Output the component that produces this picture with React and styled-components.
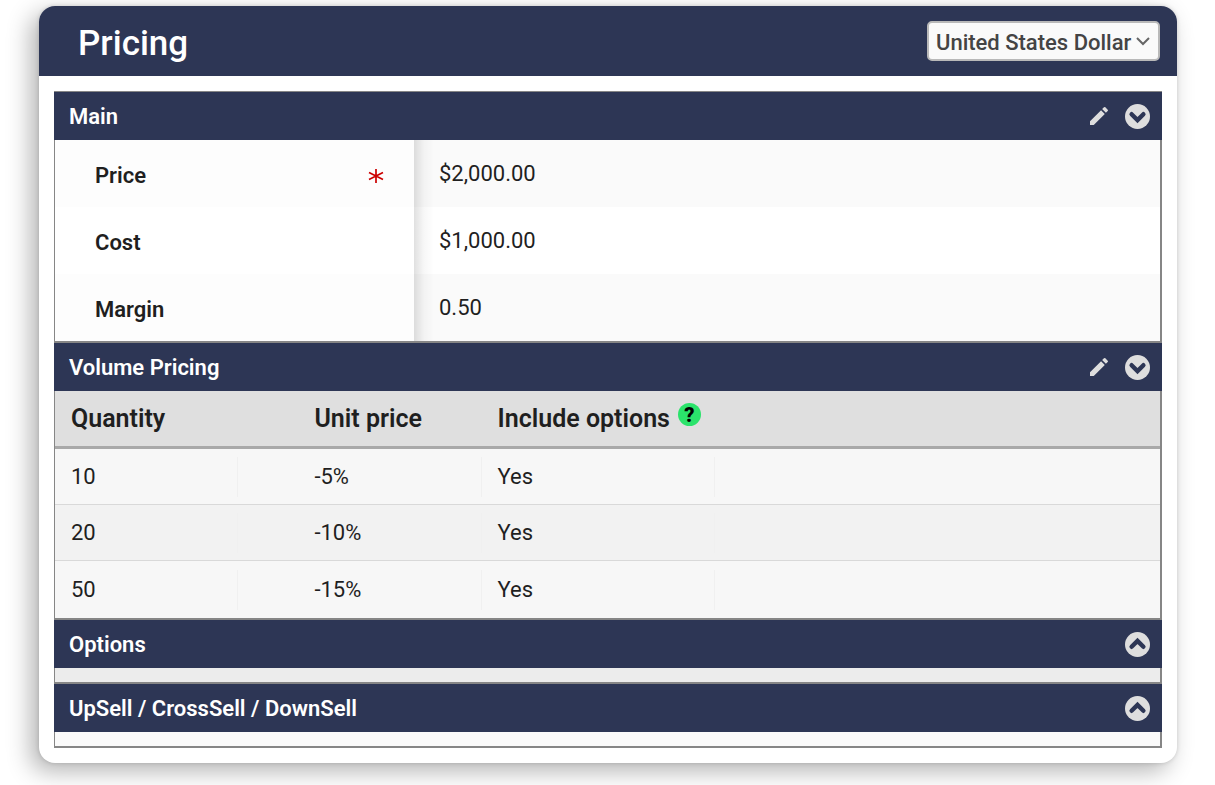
import React, { useState } from 'react';
import styled, { createGlobalStyle, ThemeProvider } from 'styled-components';
import { MdEdit } from 'react-icons/md';

const theme = {
  color: {
    primary: '#2d3655',
    text: '#1f1f1f',
    icon: '#dedede',
    border: '#868686',
    required: '#cc0000',
    help: '#2be36b',
  },
};

const mainFields = [
  { label: 'Price', value: '$2,000.00', required: true },
  { label: 'Cost', value: '$1,000.00' },
  { label: 'Margin', value: '0.50' },
];

const volumeRows = [
  { quantity: 10, price: '-5%', options: 'Yes' },
  { quantity: 20, price: '-10%', options: 'Yes' },
  { quantity: 50, price: '-15%', options: 'Yes' },
];

function Section({ title, editable, defaultOpen, emptyColor, children }) {
  const [open, setOpen] = useState(!!defaultOpen);

  return (
    <Panel>
      <PanelHeader>
        <PanelTitle>{title}</PanelTitle>
        {editable && (
          <IconButton type="button" aria-label={`Edit ${title}`}>
            <MdEdit size={24} />
          </IconButton>
        )}
        <IconButton
          type="button"
          aria-label={`Toggle ${title}`}
          aria-expanded={open}
          onClick={() => setOpen(!open)}
        >
          <Toggle viewBox="0 0 25 25">
            <circle cx="12.5" cy="12.5" r="12.5" />
            <path
              d={
                open
                  ? 'M6.6 10.2l5.9 5.9 5.9-5.9'
                  : 'M6.6 14.8l5.9-5.9 5.9 5.9'
              }
            />
          </Toggle>
        </IconButton>
      </PanelHeader>
      {open && children ? children : <Empty $color={emptyColor} />}
    </Panel>
  );
}

export default function App() {
  const [currency, setCurrency] = useState('usd');

  return (
    <ThemeProvider theme={theme}>
      <GlobalStyle />
      <Card>
        <Header>
          <Title>Pricing</Title>
          <SelectWrapper>
            <Select
              aria-label="Currency"
              value={currency}
              onChange={(e) => setCurrency(e.target.value)}
            >
              <option value="usd">United States Dollar</option>
            </Select>
            <Arrow viewBox="0 0 14 9">
              <path d="M1 1l6 6 6-6" />
            </Arrow>
          </SelectWrapper>
        </Header>

        <Body>
          <Section title="Main" editable defaultOpen>
            <Fields>
              {mainFields.map((field) => (
                <Field key={field.label}>
                  <Label>
                    {field.label}
                    {field.required && (
                      <Required viewBox="0 0 16 16">
                        <path d="M8 1v14M1 4.4l14 7.2M15 4.4l-14 7.2" />
                      </Required>
                    )}
                  </Label>
                  <Value>{field.value}</Value>
                </Field>
              ))}
            </Fields>
          </Section>

          <Section title="Volume Pricing" editable defaultOpen>
            <Table>
              <colgroup>
                <Col $width="16.6%" />
                <Col $width="22%" />
                <Col $width="21.1%" />
                <Col />
              </colgroup>
              <thead>
                <tr>
                  <Th>Quantity</Th>
                  <Th $indent>Unit price</Th>
                  <Th>
                    <HelpLabel>
                      Include options
                      <Help>?</Help>
                    </HelpLabel>
                  </Th>
                  <Th as="td" />
                </tr>
              </thead>
              <tbody>
                {volumeRows.map((row) => (
                  <Row key={row.quantity}>
                    <Td>{row.quantity}</Td>
                    <Td $indent>{row.price}</Td>
                    <Td>{row.options}</Td>
                    <Td />
                  </Row>
                ))}
              </tbody>
            </Table>
          </Section>

          <Section title="Options" emptyColor="#ececec" />
          <Section title="UpSell / CrossSell / DownSell" emptyColor="#fafafa" />
        </Body>
      </Card>
    </ThemeProvider>
  );
}

const GlobalStyle = createGlobalStyle`
  * {
    box-sizing: border-box;
  }

  body {
    margin: 0;
    background-color: #fff;
    color: ${(props) => props.theme.color.text};
    font-family: Roboto, 'Liberation Sans', sans-serif;
    font-size: 22px;
  }

  #root {
    display: flow-root;
  }
`;

const Card = styled.main`
  margin: 6px 38px 22px 39px;
  border-radius: 16px;
  background-color: #fff;
  box-shadow: -8px 8px 24px rgba(0, 0, 0, 0.3), 0 0 4px rgba(0, 0, 0, 0.15);
`;

const Header = styled.header`
  display: flex;
  align-items: center;
  justify-content: space-between;
  height: 70px;
  padding: 0 17px 0 39px;
  border-radius: 16px 16px 0 0;
  background-color: ${(props) => props.theme.color.primary};
`;

const Title = styled.h1`
  margin: 0;
  padding-top: 4px;
  color: #fff;
  font-size: 35px;
  font-weight: 500;
`;

const SelectWrapper = styled.div`
  position: relative;
`;

const Select = styled.select`
  appearance: none;
  width: 233px;
  height: 40px;
  padding: 2px 7px 0;
  border: 2px solid #b9b9b9;
  border-radius: 5px;
  background-color: #fafafa;
  color: #444;
  font-family: inherit;
  font-size: 22px;
  font-weight: 500;
`;

const Arrow = styled.svg`
  position: absolute;
  top: 16px;
  right: 10px;
  width: 14px;
  height: 9px;
  fill: none;
  stroke: #666;
  stroke-width: 2;
  pointer-events: none;
`;

const Body = styled.div`
  padding: 15px;
`;

const Panel = styled.section`
  border: 2px solid ${(props) => props.theme.color.border};
  border-width: 2px 2px 0 1px;

  &:first-child {
    border-top-width: 1px;
  }

  &:last-child {
    border-bottom-width: 2px;
  }
`;

const PanelHeader = styled.div`
  display: flex;
  align-items: center;
  gap: 14px;
  height: 48px;
  margin: 0 -2px 0 -1px;
  padding: 0 12px 0 15px;
  background-color: ${(props) => props.theme.color.primary};
`;

const PanelTitle = styled.h2`
  flex: 1;
  margin: 0;
  color: #fff;
  font-size: 22px;
  font-weight: 600;
`;

const IconButton = styled.button`
  display: flex;
  padding: 0;
  border: none;
  background: none;
  color: ${(props) => props.theme.color.icon};
  cursor: pointer;
`;

const Toggle = styled.svg`
  width: 25px;
  height: 25px;

  & > circle {
    fill: currentColor;
  }

  & > path {
    fill: none;
    stroke: ${(props) => props.theme.color.primary};
    stroke-width: 4.4;
    stroke-linecap: round;
  }
`;

const Empty = styled.div`
  height: 14px;
  background-color: ${(props) => props.$color};
`;

const Fields = styled.dl`
  margin: 0;
`;

const Field = styled.div`
  display: grid;
  grid-template-columns: 359px 1fr;
  height: 67px;
  background-color: #fafafa;

  &:nth-child(even) {
    background-color: #fff;
  }
`;

const Label = styled.dt`
  display: flex;
  align-items: center;
  justify-content: space-between;
  padding: 4px 30px 0 40px;
  background-color: #fdfdfd;
  font-weight: 600;

  ${Field}:nth-child(even) & {
    background-color: #fff;
  }
`;

const Required = styled.svg`
  width: 16px;
  height: 16px;
  fill: none;
  stroke: ${(props) => props.theme.color.required};
  stroke-width: 1.7;
`;

const Value = styled.dd`
  display: flex;
  align-items: center;
  margin: 0;
  padding-left: 25px;
  background: linear-gradient(
      to right,
      rgba(0, 0, 0, 0.12),
      rgba(0, 0, 0, 0.03) 10px,
      transparent 20px
    )
    no-repeat;
`;

const Table = styled.table`
  width: 100%;
  table-layout: fixed;
  border-collapse: separate;
  border-spacing: 0;
`;

const Col = styled.col`
  width: ${(props) => props.$width || 'auto'};
`;

const Th = styled.th`
  height: 58px;
  padding: 0 0 0 ${(props) => (props.$indent ? '76px' : '16px')};
  border-bottom: 3px solid #a9a9a9;
  background-color: #dfdfdf;
  font-size: 25px;
  font-weight: 600;
  text-align: left;
  white-space: nowrap;
`;

const HelpLabel = styled.span`
  display: flex;
  align-items: center;
  gap: 8px;
`;

const Help = styled.span`
  display: flex;
  align-items: center;
  justify-content: center;
  width: 23px;
  height: 23px;
  margin-bottom: 8px;
  border-radius: 50%;
  background-color: ${(props) => props.theme.color.help};
  color: #000;
  font-size: 20px;
  font-weight: 900;
`;

const Row = styled.tr`
  background-color: #f7f7f7;

  &:nth-child(even) {
    background-color: #f2f2f2;
  }
`;

const Td = styled.td`
  height: 56px;
  padding: 0 0 0 ${(props) => (props.$indent ? '76px' : '16px')};
  border-bottom: 1px solid #d9d9d9;
  background: linear-gradient(#f0f0f0, #f0f0f0) right center / 1px 40px
    no-repeat;

  &:last-child {
    background: none;
  }

  ${Row}:last-child & {
    height: 57px;
    border-bottom: none;
  }
`;
